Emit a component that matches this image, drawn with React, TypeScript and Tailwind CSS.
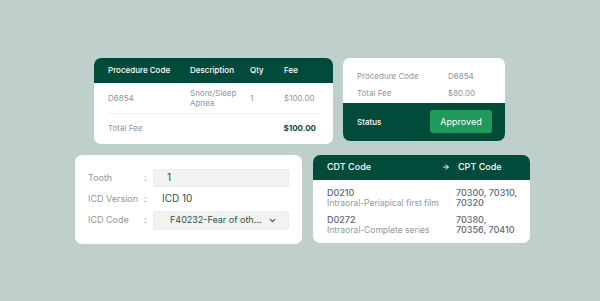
import { ChevronDown, ArrowRight } from "lucide-react";

const DARK = "bg-[#024b3b]";

function FeeTable() {
  return (
    <div className="w-[239px] h-[86px] overflow-hidden rounded-[7px] bg-white">
      <div className={`${DARK} grid h-[25px] grid-cols-[82px_60px_34px_1fr] items-center px-[14px] text-[8px] font-medium text-white`}>
        <span>Procedure Code</span>
        <span>Description</span>
        <span>Qty</span>
        <span>Fee</span>
      </div>
      <div className="mx-[14px] grid h-[31px] grid-cols-[82px_60px_34px_1fr] items-center border-b border-[#edf0f2] text-[8px] leading-[10px] text-[#8b94a5]">
        <span>D6854</span>
        <span>
          Snore/Sleep
          <br />
          Apnea
        </span>
        <span>1</span>
        <span>$100.00</span>
      </div>
      <div className="mx-[14px] flex h-[28px] items-center justify-between text-[8px]">
        <span className="text-[#8b94a5]">Total Fee</span>
        <span className="pr-[3px] font-bold text-[#0b4b3c]">$100.00</span>
      </div>
    </div>
  );
}

function StatusCard() {
  return (
    <div className="w-[162px] h-[83px] overflow-hidden rounded-[7px] bg-white">
      <div className="h-[45px] pl-[14px] pt-[10px] text-[8px] text-[#8b94a5]">
        <div className="grid h-[17px] grid-cols-[91px_1fr] items-center">
          <span>Procedure Code</span>
          <span>D6854</span>
        </div>
        <div className="grid h-[17px] grid-cols-[91px_1fr] items-center">
          <span>Total Fee</span>
          <span>$80.00</span>
        </div>
      </div>
      <div className={`${DARK} flex h-[38px] items-center justify-between pl-[14px] pr-[13px]`}>
        <span className="text-[8px] font-medium text-white">Status</span>
        <button className="flex h-[23px] w-[62px] items-center justify-center rounded-[3px] bg-[#1f9a5b] text-[9px] text-white">
          Approved
        </button>
      </div>
    </div>
  );
}

function ToothForm() {
  const label = "w-[56px] shrink-0 text-[9px] text-[#92969d]";
  const colon = "w-[9px] shrink-0 text-[9px] text-[#92969d]";
  return (
    <div className="flex w-[227px] h-[89px] flex-col rounded-[7px] bg-white px-[13px] py-[14px]">
      <div className="flex h-[18px] items-center">
        <span className={label}>Tooth</span>
        <span className={colon}>:</span>
        <div className="flex h-[18px] flex-1 items-center rounded-[2px] border border-[#ececec] bg-[#f2f2f2] pl-[13px] text-[10px] text-[#2a5548]">
          1
        </div>
      </div>
      <div className="flex h-[16px] my-[4px] items-center">
        <span className={label}>ICD Version</span>
        <span className={colon}>:</span>
        <span className="pl-[9px] text-[10px] text-[#2a5548]">ICD 10</span>
      </div>
      <div className="flex h-[19px] items-center">
        <span className={label}>ICD Code</span>
        <span className={colon}>:</span>
        <div className="flex h-[19px] flex-1 items-center justify-between rounded-[2px] border border-[#ececec] bg-[#f2f2f2] pl-[16px] pr-[11px] text-[9px] text-[#2a5548]">
          <span className="whitespace-nowrap">F40232-Fear of oth...</span>
          <ChevronDown size={9} strokeWidth={3} className="text-[#2a5548]" />
        </div>
      </div>
    </div>
  );
}

const mappings = [
  { cdt: "D0210", desc: "Intraoral-Periapical first film", cpt: ["70300, 70310,", "70320"] },
  { cdt: "D0272", desc: "Intraoral-Complete series", cpt: ["70380,", "70356, 70410"] },
];

function CodeMap() {
  return (
    <div className="w-[217px] h-[88px] overflow-hidden rounded-[7px] bg-white">
      <div className={`${DARK} flex h-[25px] items-center pl-[14px] text-[9px] font-medium text-white`}>
        <span className="w-[115px]">CDT Code</span>
        <ArrowRight size={8} strokeWidth={3} className="mr-[8px]" />
        <span>CPT Code</span>
      </div>
      <div className="flex flex-col gap-[7px] pl-[14px] pt-[8px] text-[8.5px] leading-[10px]">
        {mappings.map((m) => (
          <div key={m.cdt} className="flex">
            <div className="w-[129px]">
              <div className="text-[9px] font-medium text-[#5d6679]">{m.cdt}</div>
              <div className="text-[#9198a6]">{m.desc}</div>
            </div>
            <div className="text-[9px] font-medium text-[#5d6679]">
              {m.cpt.map((c) => (
                <div key={c}>{c}</div>
              ))}
            </div>
          </div>
        ))}
      </div>
    </div>
  );
}

export default function App() {
  return (
    <div
      className="flex h-screen w-full flex-col items-center justify-center gap-[11px] bg-[#bfcfcc]"
      style={{ fontFamily: "Inter, 'Noto Sans', sans-serif" }}
    >
      <div className="ml-[-1px] flex items-start gap-[10px]">
        <FeeTable />
        <StatusCard />
      </div>
      <div className="ml-[5px] flex items-start gap-[11px]">
        <ToothForm />
        <CodeMap />
      </div>
    </div>
  );
}
